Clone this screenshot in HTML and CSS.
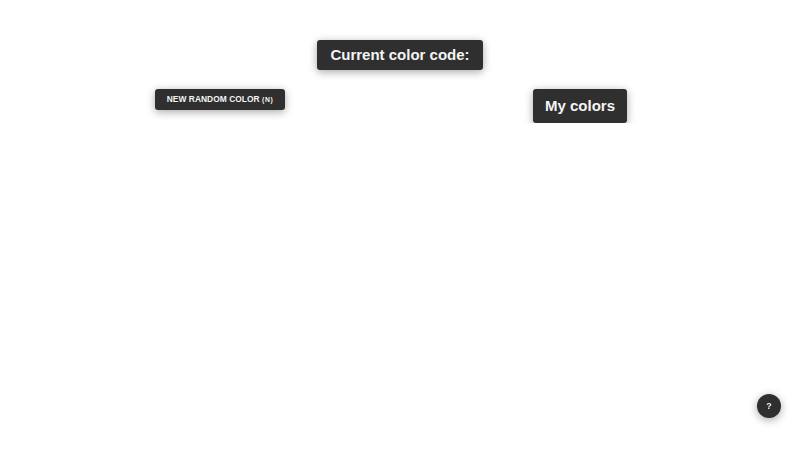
FILE: index.html
```html
<!DOCTYPE html>
<html>
<head>
<meta charset="utf-8">
<link rel="stylesheet" href="styles.css">
</head>
<body>
<div class="page">
  <header class="head">
    <div class="title">Current color code:</div>
  </header>
  <main class="cols">
    <section class="col">
      <button class="btn">NEW RANDOM COLOR <span class="key">(N)</span></button>
    </section>
    <section class="col">
      <div class="mine">My colors</div>
    </section>
  </main>
</div>
<button class="help">?</button>
</body>
</html>
```
FILE: styles.css
```css
html, body {
  margin: 0;
  background: #ffffff;
  font-family: "Liberation Sans", Arial, sans-serif;
}
.page {
  width: 720px;
  margin: 0 auto;
  padding-top: 40px;
}
.head {
  display: flex;
  justify-content: center;
}
.title, .mine, .btn, .help {
  background: #2f2f2f;
  color: #f4f4f4;
  font-weight: bold;
  border-radius: 3px;
  box-shadow: 0 2px 8px rgba(0,0,0,0.35);
}
.title {
  font-size: 15px;
  line-height: 18px;
  padding: 6px 13px;
}
.cols {
  display: grid;
  grid-template-columns: 1fr 1fr;
  margin-top: 19px;
}
.col {
  display: flex;
  justify-content: center;
  align-items: flex-start;
}
.btn {
  border: none;
  font-family: inherit;
  font-size: 8.4px;
  letter-spacing: 0.05px;
  line-height: 11px;
  padding: 5px 12px;
  cursor: pointer;
}
.key {
  font-size: 6.8px;
  letter-spacing: 0.6px;
}
.mine {
  font-size: 15px;
  line-height: 18px;
  padding: 8px 12px;
}
.help {
  position: fixed;
  right: 19px;
  bottom: 32px;
  width: 24px;
  height: 24px;
  border-radius: 50%;
  border: none;
  padding: 0;
  font-family: inherit;
  font-size: 9px;
  line-height: 24px;
  text-align: center;
}
```
